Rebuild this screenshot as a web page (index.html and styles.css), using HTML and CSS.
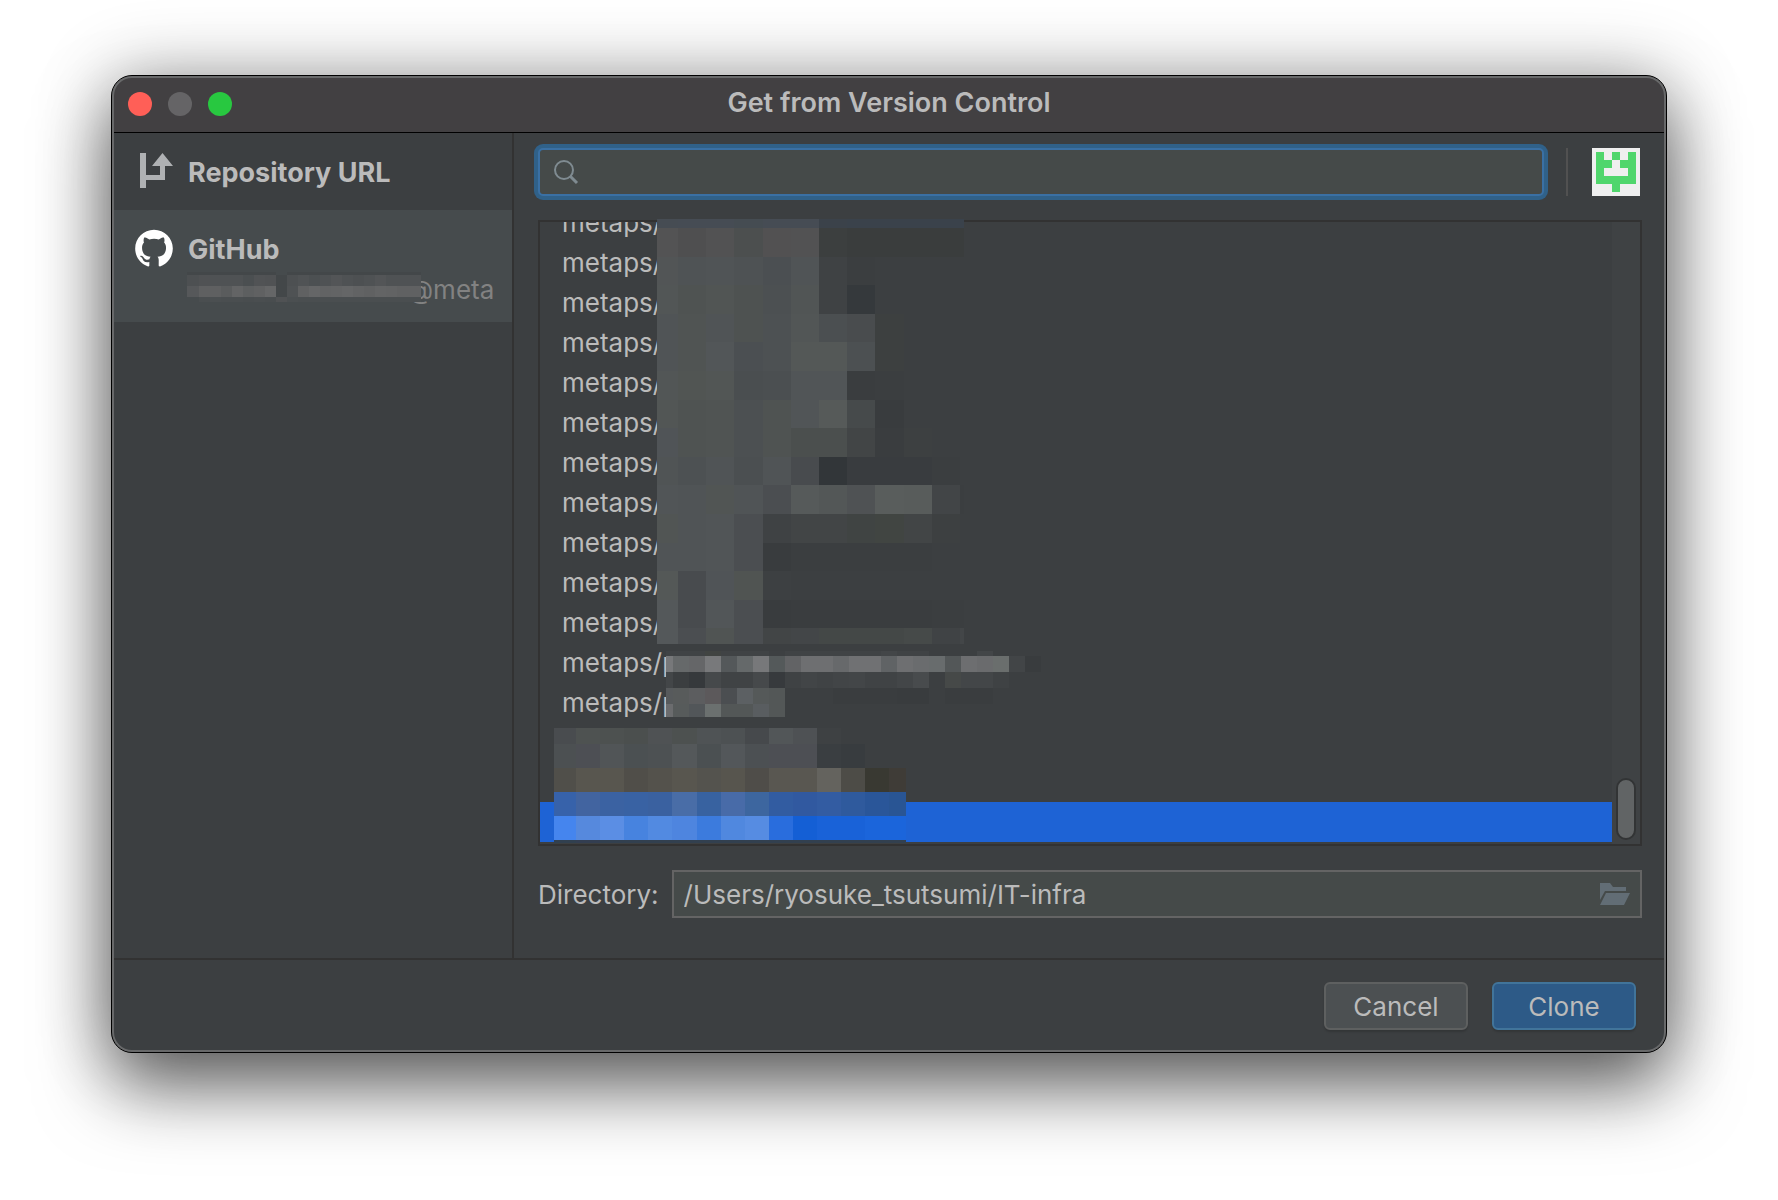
FILE: index.html
```html
<!DOCTYPE html>
<html lang="en">

<head>
    <meta charset="UTF-8">
    <meta name="viewport" content="width=device-width, initial-scale=1.0">
    <title>Get from Version Control</title>
    <link rel="stylesheet" href="styles.css">
</head>

<body>
    <div class="window">
        <header class="titlebar">
            <div class="lights">
                <button class="light close" aria-label="Close"></button>
                <button class="light minimize" aria-label="Minimize" disabled></button>
                <button class="light zoom" aria-label="Zoom"></button>
            </div>
            <h1 class="title">Get from Version Control</h1>
        </header>

        <div class="content">
            <nav class="sidebar">
                <button class="source">
                    <svg class="source-icon" viewBox="0 0 40 40">
                        <path fill="#afb1b3" d="M6 1h6v35H6zM12 23h14v-9h-8L28.500 1 39 14h-8v14H12z" />
                    </svg>
                    <span class="source-name">Repository URL</span>
                </button>
                <button class="source selected">
                    <svg class="source-icon" viewBox="-.5 -.3 17 17">
                        <path fill="#fff" d="M8 0C3.58 0 0 3.58 0 8c0 3.54 2.29 6.53 5.47 7.59.4.07.55-.17.55-.38 0-.19-.01-.82-.01-1.49-2.01.37-2.53-.49-2.69-.94-.09-.23-.48-.94-.82-1.13-.28-.15-.68-.52-.01-.53.63-.01 1.08.58 1.23.82.72 1.21 1.87.87 2.33.66.07-.52.28-.87.51-1.07-1.78-.2-3.64-.89-3.64-3.95 0-.87.31-1.59.82-2.15-.08-.2-.36-1.02.08-2.12 0 0 .67-.21 2.2.82.64-.18 1.32-.27 2-.27s1.36.09 2 .27c1.53-1.04 2.2-.82 2.2-.82.44 1.1.16 1.92.08 2.12.51.56.82 1.27.82 2.15 0 3.07-1.87 3.75-3.65 3.95.29.25.54.73.54 1.48 0 1.07-.01 1.93-.01 2.2 0 .21.15.46.55.38A8.01 8.01 0 0 0 16 8c0-4.42-3.58-8-8-8z" />
                    </svg>
                    <span class="source-name">GitHub</span>
                    <span class="account"><svg class="mosaic" id="maskAccount"></svg>@meta</span>
                </button>
            </nav>

            <main class="panel">
                <div class="toolbar">
                    <label class="search">
                        <svg class="search-icon" viewBox="0 0 26 26">
                            <circle cx="11" cy="11" r="9" fill="none" stroke="#7f8b91" stroke-width="2" />
                            <path d="M17 17l7 7" stroke="#7f8b91" stroke-width="3" />
                        </svg>
                        <input class="search-input" type="text" aria-label="Search">
                    </label>
                    <div class="separator"></div>
                    <button class="avatar" aria-label="Account">
                        <svg viewBox="0 0 48 48" shape-rendering="crispEdges">
                            <path fill="#efefef" d="M0 0h48v48H0z" />
                            <path fill="#50d66c" d="M4 4h8v8h8V4h8v8h8V4h8v32H28v8h-8v-8H4z" />
                            <path fill="#efefef" d="M20 12h8v8h8v8H12v-8h8z" />
                        </svg>
                    </button>
                </div>

                <div class="list-box">
                    <ul class="repos">
                        <li class="repo">metaps/</li>
                        <li class="repo">metaps/</li>
                        <li class="repo">metaps/</li>
                        <li class="repo">metaps/</li>
                        <li class="repo">metaps/</li>
                        <li class="repo">metaps/</li>
                        <li class="repo">metaps/</li>
                        <li class="repo">metaps/</li>
                        <li class="repo">metaps/</li>
                        <li class="repo">metaps/</li>
                        <li class="repo">metaps/</li>
                        <li class="repo">metaps/p</li>
                        <li class="repo">metaps/p</li>
                        <li class="repo"></li>
                        <li class="repo"></li>
                        <li class="repo active"></li>
                    </ul>
                    <div class="track">
                        <div class="thumb"></div>
                    </div>
                    <svg class="mosaic" id="maskList"></svg>
                </div>

                <div class="directory">
                    <label class="directory-label" for="directory">Directory:</label>
                    <div class="field">
                        <input class="field-input" id="directory" type="text" value="/Users/ryosuke_tsutsumi/IT-infra">
                        <button class="browse" aria-label="Browse">
                            <svg viewBox="0 0 30 22">
                                <path fill="#626d75" d="M0 0h10l3 4h13v4H5L0 17zM6 10h24l-6 12H0z" />
                            </svg>
                        </button>
                    </div>
                </div>
            </main>
        </div>

        <footer class="footer">
            <button class="button">Cancel</button>
            <button class="button primary">Clone</button>
        </footer>
    </div>

    <script src="mosaic.js"></script>
</body>

</html>
```
FILE: styles.css
```css
* {
    margin: 0;
    padding: 0;
    box-sizing: border-box;
}

body {
    background-color: #fff;
    color: #bbbbbb;
    font-family: Inter, "Liberation Sans", sans-serif;
    font-size: 26px;
    line-height: 42px;
    min-height: 100vh;
    padding: 75px 111px 147px;
    display: flex;
    overflow: hidden;
}

button,
input {
    font: inherit;
    color: inherit;
    background: none;
    border: none;
    outline: none;
}

svg {
    display: block;
}

.window {
    position: relative;
    flex: 1;
    min-width: 0;
    display: flex;
    flex-direction: column;
    background-color: #3c3f41;
    border: 1px solid #000;
    border-radius: 21px;
    overflow: hidden;
    box-shadow: 0 36px 72px rgba(0, 0, 0, 0.55),
        0 0 72px rgba(0, 0, 0, 0.3);
}

/* light rim inside the window edge */
.window::after {
    content: "";
    position: absolute;
    inset: 0;
    border: 2px solid #68696a;
    border-radius: 20px;
    pointer-events: none;
}

.titlebar {
    position: relative;
    height: 57px;
    padding: 0 16px;
    display: flex;
    align-items: center;
    background-color: #424042;
    border-bottom: 1px solid #000;
}

.lights {
    display: flex;
    gap: 16px;
}

.light {
    width: 24px;
    height: 24px;
    border-radius: 50%;
}

.close {
    background-color: #ff5f57;
}

.minimize {
    background-color: #656466;
}

.zoom {
    background-color: #28c840;
}

.title {
    position: absolute;
    left: 0;
    right: 0;
    top: 6px;
    text-align: center;
    font-size: 27px;
    font-weight: 600;
    pointer-events: none;
}

.content {
    flex: 1;
    display: flex;
    min-height: 0;
}

.sidebar {
    width: 402px;
    flex-shrink: 0;
    border-right: 2px solid #323232;
}

.source {
    width: 100%;
    padding: 19px 14px 16px 22px;
    display: grid;
    grid-template-columns: 40px 1fr;
    column-gap: 14px;
    text-align: left;
}

.source.selected {
    padding-bottom: 13px;
    background-color: #464b4d;
}

.source-icon {
    width: 40px;
    height: 40px;
}

.source-name {
    font-size: 27px;
    font-weight: 700;
}

.account {
    position: relative;
    grid-column: 2;
    padding-left: 220px;
    line-height: 38px;
    color: #828282;
    white-space: nowrap;
}

.mosaic {
    position: absolute;
    left: 0;
    top: 0;
    overflow: visible;
    pointer-events: none;
}

.panel {
    flex: 1;
    min-width: 0;
    padding: 15px 24px 40px;
    display: flex;
    flex-direction: column;
    gap: 24px;
}

.toolbar {
    display: flex;
    height: 48px;
}

.search {
    flex: 1;
    display: flex;
    align-items: center;
    gap: 10px;
    padding: 0 13px;
    background-color: #454a49;
    border: 2px solid #3a70a4;
    border-radius: 5px;
    box-shadow: 0 0 0 4px #306189;
}

.search-icon {
    width: 26px;
    height: 26px;
}

.search-input {
    flex: 1;
    min-width: 0;
}

.separator {
    width: 2px;
    margin: 0 24px 0 22px;
    background-color: #515151;
}

.avatar {
    width: 48px;
    height: 48px;
    margin-right: 2px;
}

.list-box {
    position: relative;
    height: 626px;
    display: flex;
    border: 2px solid #323232;
}

/* scrolled to the end, so the first row is cut off */
.repos {
    flex: 1;
    display: flex;
    flex-direction: column;
    justify-content: flex-end;
    padding-bottom: 2px;
    list-style: none;
    overflow: hidden;
}

.repo {
    flex: none;
    height: 40px;
    padding-left: 22px;
}

.repo.active {
    background-color: #1e63d5;
}

.track {
    width: 28px;
    padding: 0 4px 4px;
    display: flex;
    align-items: flex-end;
    background-color: #3f4244;
}

.thumb {
    width: 20px;
    height: 62px;
    background-color: #616465;
    border: 2px solid #323435;
    border-radius: 10px;
}

.directory {
    display: flex;
    align-items: center;
    gap: 13px;
}

.directory-label {
    padding-top: 2px;
}

.field {
    flex: 1;
    height: 48px;
    display: flex;
    align-items: center;
    padding: 0 10px;
    background-color: #454a49;
    border: 2px solid #646464;
}

.field-input {
    flex: 1;
    min-width: 0;
    padding-top: 2px;
}

.browse {
    width: 30px;
    height: 22px;
}

.footer {
    height: 94px;
    padding: 22px 30px 0;
    display: flex;
    justify-content: flex-end;
    gap: 24px;
    border-top: 2px solid #323232;
}

.button {
    width: 144px;
    height: 48px;
    padding-top: 2px;
    background-color: #4c5052;
    border: 2px solid #5e6060;
    border-radius: 6px;
    box-shadow: 0 2px 2px rgba(0, 0, 0, 0.15);
}

.button.primary {
    background-color: #2d5a87;
    border-color: #41749a;
}
```
FILE: mosaic.js
```javascript
// x and y hold the cell edges, rows hold the cell colours ('-' = empty)
function range(first, step, count) {
    const edges = []
    for (let i = 0; i < count; i++) edges.push(Math.round(first + step * i))
    return edges
}

function mosaic(id, x, y, rows) {
    const svg = document.getElementById(id)
    rows.forEach(function (row, r) {
        row.split(' ').forEach(function (color, c) {
            if (color === '-') return
            const rect = document.createElementNS('http://www.w3.org/2000/svg', 'rect')
            rect.setAttribute('x', x[c])
            rect.setAttribute('y', y[r])
            rect.setAttribute('width', x[c + 1] - x[c])
            rect.setAttribute('height', y[r + 1] - y[r])
            rect.setAttribute('fill', '#' + color)
            svg.appendChild(rect)
        })
    })
}

// account name
mosaic('maskAccount', [-1].concat(range(11, 11, 20), [233]), [1, 4, 15, 26, 31], [
    '434749 434749 434749 434749 434749 434749 434749 434749 464b4d 434749 434749 434749 434749 434749 434749 434749 434749 434749 434749 434749 434749',
    '4d5052 505254 4f5254 4f5254 4f5254 4b4f51 515355 505254 434749 4d5052 505355 4c5052 4f5254 535557 4f5254 4d5052 4f5254 535557 4f5254 4f5254 4f5254',
    '56585a 5f6061 5f6061 5a5c5d 636465 5d5f60 606162 656667 434749 4f5254 606162 656667 626364 636465 656667 626364 606162 636465 626364 606162 606162',
    '- 4a4e50 4b4f51 4a4e50 4a4e50 494d4f 4a4e50 494d4f 505254 4b4f51 4a4e50 4a4e50 4a4e50 4a4e50 4a4e50 4a4e50 4a4e50 4a4e50 4a4e50 4a4e50 4a4e50'
])

// long names
mosaic('maskList', [117].concat(range(138, 28.2, 11), [424]), [-3].concat(range(6, 28.6, 15), [422]), [
    '464c53 464c54 464c54 454c52 464c54 464c54 3b424a 3a424b 3a424b 3a424b 3a424b 3a424b',
    '535354 4f4f50 525253 4c4f4f 525152 525253 3c3f3f 3a3d3d 3a3d3d 3a3d3d 3a3d3d 3a3d3d',
    '525556 4f5355 505456 4e5254 4b4f52 505456 3f4244 3b3e40 - - - -',
    '525656 4f5352 515554 4e5251 4c5052 515555 3f4244 35393c - - - -',
    '505456 505453 505456 4e5251 4d5153 525656 4b4f51 494c4e 3d4040 - - -',
    '505456 505453 525658 4b4f52 4d5153 545857 545857 4c5052 3d4040 - - -',
    '525656 515553 525655 4a4e50 4b4f51 515557 515557 3a3d3f 3b3e40 - - -',
    '525655 4f5352 505453 4c5052 4f5352 515557 565a59 464a4b 393c3e - - -',
    '505457 4f5352 505453 4c5052 4f5352 4b4f4e 4b4f4e 424546 3a3d3f 3d4041 - -',
    '505455 4d5153 505456 4b4f51 505456 484b4e 323639 393c3f 393c3f 393c3f 3b3e40 -',
    '515557 505456 515554 505456 4b4e51 565a5a 535757 4f5254 595d5c 585c5b 424547 3b3e40',
    '515554 505456 515557 4b4e51 3f4244 424546 424546 404443 414542 424546 3d4041 -',
    '505456 505456 515557 4b4e51 393c3e 3b3e40 3b3e40 3b3e40 3b3e40 3b3e40 - -',
    '545857 484b4e 505457 505452 3d4042 3c3f41 3c3f41 3c3f41 3c3f41 3c3f41 - -',
    '54585a 484b4e 525658 4b4e51 393c3e 3a3d3f 3a3d3f 3a3d3f 3a3d3f 3a3d3f 3b3e40 3b3e40',
    '54585a 4b4e51 505453 4b4e51 424546 434648 444847 444847 444847 464a49 404345 434648'
])

mosaic('maskList', [126].concat(range(133, 16, 24)), [429, 434, 450, 466, 482, 495], [
    '404345 404345 404345 414442 404345 404345 404345 3d4042 404345 404345 404345 404345 404345 404345 434648 404345 404345 - - - 434648 -',
    '77787a 66696a 656668 78797b 54585a 65696a 77787a 54595a 626365 6e6f71 6e6f71 67696b 707173 707173 606365 6e6f71 6a6c6e 686c6d 535758 6d6e70 6a6b6d 6a6e6d 424547 393c3e',
    '434648 3b3e40 36393c 46494b 404345 404345 46494b 373a3d 3f4244 424547 404345 424547 434648 404345 404345 434648 484b4d 3c3f41 464948 434648 434648 3f4244',
    '575a5c 585b5b 5c5d5f 5c595b 4b4e51 5c6063 555959 535757 - - - 3a3d3f 3a3d3f 3a3d3f 3a3d3f 393c3e 393c3e - 3a3d3f 3a3d3f 3a3d3f -',
    '6b6c6e 575b5b 525659 6b706f 535757 535757 595d60 535757'
])

// last rows, partly over the selection
mosaic('maskList', [14].concat(range(36, 24.1, 14), [366]), [506, 522, 546, 570, 594, 618, 621], [
    '494c4f 4e5251 4d5150 4b4f4e 4f5254 4d5150 4f5355 4d5153 46494c 525658 4e5154 3e4143 - - -',
    '4c5052 4d4f54 515557 4b5052 4d5153 54585a 4b5052 53575a 4c5053 4d4f54 4d4f54 3a3e41 383c3f 3c3f41 -',
    '504f4a 58564f 58564f 504e49 54524c 58564f 54534e 57554e 4f4d49 595751 595751 64635e 4d4c47 393932 3f3c37',
    '3762aa 4264a0 3b62a2 3962a3 3a61a0 496da7 3862a0 486ba8 3d669f 325ca1 3159a0 335ca2 2f5a9d 2a5699 295594',
    '4585ee 5689dd 5b8ee4 4783df 528ae1 4e85df 3c7bdd 5088df 568ce2 296ddd 145fd5 1962d8 1962d8 1b65db 1b65db',
    '31404f 333e51 32404f 32404f 32404f 32404f 32404f 32404f 32404f 32404f 32404f 32404f 32404f 32404f 32404f'
])
```
